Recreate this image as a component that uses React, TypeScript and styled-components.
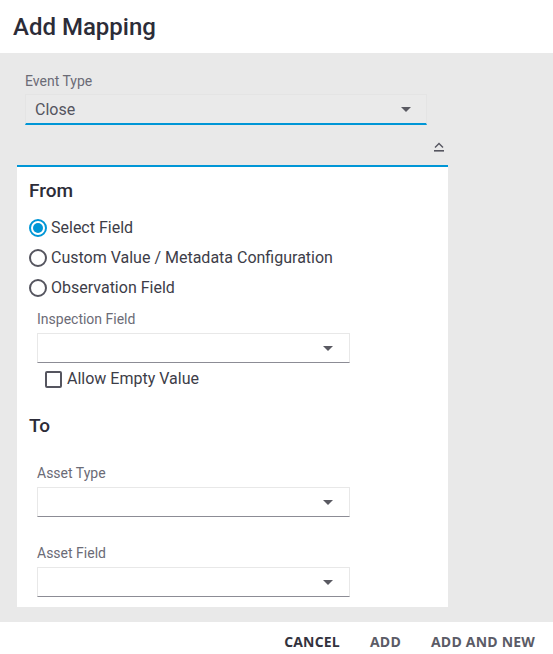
import React, { useState } from 'react';
import styled, { createGlobalStyle } from 'styled-components';

const GlobalStyle = createGlobalStyle`
  html, body {
    margin: 0;
    padding: 0;
    background: #ffffff;
    font-family: Roboto, 'Noto Sans', sans-serif;
  }
`;

const Dialog = styled.div`
  width: 553px;
  min-height: 654px;
  display: flex;
  flex-direction: column;
  background: #ffffff;
`;

const Title = styled.h2`
  margin: 0;
  height: 53px;
  padding: 0 13px;
  display: flex;
  align-items: center;
  font-size: 24px;
  font-weight: 500;
  color: #2c2c38;
`;

const Body = styled.div`
  background: #e9e9e9;
  padding: 19px 105px 15px 17px;
`;

const Top = styled.div`
  padding: 0 21px 0 8px;
`;

const Label = styled.div<{ $gap?: number }>`
  font-size: 14px;
  color: #6b6b76;
  line-height: 18px;
  margin-bottom: ${p => p.$gap ?? 5}px;
`;

const SelectBox = styled.div<{ $variant: 'filled' | 'outlined' }>`
  position: relative;
  display: flex;
  align-items: center;
  box-sizing: border-box;
  height: ${p => (p.$variant === 'filled' ? '31px' : '30px')};
  padding: 0 9px;
  font-size: 16px;
  color: #55555f;
  background: ${p => (p.$variant === 'filled' ? '#eaeaea' : '#ffffff')};
  border: 1px solid ${p => (p.$variant === 'filled' ? '#e4e4e4' : '#e8e8e8')};
  border-bottom: ${p => (p.$variant === 'filled' ? '2px solid #0096d6' : '1px solid #8c8c95')};
  width: ${p => (p.$variant === 'filled' ? '402px' : '313px')};
`;

const Arrow = styled.span<{ $right: number }>`
  position: absolute;
  right: ${p => p.$right}px;
  top: 50%;
  margin-top: -2px;
  width: 0;
  height: 0;
  border-left: 5px solid transparent;
  border-right: 5px solid transparent;
  border-top: 5px solid #5a5a62;
`;

const CollapseRow = styled.div`
  height: 42px;
  display: flex;
  align-items: center;
  justify-content: flex-end;
  padding: 4px 3px 0 0;
  box-sizing: border-box;
  border-bottom: 2px solid #0096d6;
`;

const Card = styled.div`
  background: #ffffff;
  padding: 12px 12px 10px 12px;
`;

const SectionTitle = styled.h3<{ $top?: number }>`
  margin: ${p => p.$top ?? 0}px 0 0 0;
  font-size: 19px;
  font-weight: 500;
  color: #2c2c38;
  line-height: 24px;
`;

const RadioGroup = styled.div`
  margin-top: 14px;
  display: flex;
  flex-direction: column;
  gap: 8px;
`;

const RadioRow = styled.label`
  display: flex;
  align-items: center;
  gap: 4px;
  font-size: 16px;
  color: #3d3d48;
  line-height: 22px;
  cursor: pointer;
`;

const RadioCircle = styled.span<{ $checked: boolean }>`
  width: 14px;
  height: 14px;
  border-radius: 50%;
  border: 2px solid ${p => (p.$checked ? '#0096d6' : '#55555f')};
  display: flex;
  align-items: center;
  justify-content: center;
  &::after {
    content: '';
    width: 10px;
    height: 10px;
    border-radius: 50%;
    background: ${p => (p.$checked ? '#0096d6' : 'transparent')};
  }
`;

const FieldBlock = styled.div<{ $top: number }>`
  margin: ${p => p.$top}px 0 0 8px;
`;

const CheckRow = styled.label`
  display: flex;
  align-items: center;
  gap: 5px;
  margin: 7px 0 0 16px;
  font-size: 16px;
  color: #3d3d48;
  line-height: 18px;
`;

const CheckBox = styled.span`
  width: 13px;
  height: 13px;
  border: 2px solid #55555f;
  border-radius: 2px;
`;

const Footer = styled.div`
  height: 32px;
  display: flex;
  align-items: center;
  justify-content: flex-end;
  padding: 3px 3px 0 0;
`;

const FooterButton = styled.button<{ $dim?: boolean }>`
  background: none;
  border: none;
  padding: 0 15px;
  font-family: 'Open Sans', sans-serif;
  font-size: 14px;
  font-weight: 700;
  letter-spacing: 0.2px;
  color: ${p => (p.$dim ? '#5b5b66' : '#33333e')};
  cursor: pointer;
`;

const options = ['Select Field', 'Custom Value / Metadata Configuration', 'Observation Field'];

function CollapseIcon(): JSX.Element {
  return (
    <svg width="12" height="12" viewBox="0 0 12 12">
      <path d="M2 6.5 L6 2.5 L10 6.5" fill="none" stroke="#55555f" strokeWidth="1.4" />
      <rect x="1" y="9" width="10" height="1.6" fill="#55555f" />
    </svg>
  );
}

export default function App(): JSX.Element {
  const [source, setSource] = useState(0);

  return (
    <Dialog>
      <GlobalStyle />
      <Title>Add Mapping</Title>
      <Body>
        <Top>
          <Label $gap={4}>Event Type</Label>
          <SelectBox $variant="filled">
            Close
            <Arrow $right={15} />
          </SelectBox>
        </Top>
        <CollapseRow>
          <CollapseIcon />
        </CollapseRow>
        <Card>
          <SectionTitle>From</SectionTitle>
          <RadioGroup>
            {options.map((o, i) => (
              <RadioRow key={o} onClick={() => setSource(i)}>
                <RadioCircle $checked={source === i} />
                {o}
              </RadioRow>
            ))}
          </RadioGroup>
          <FieldBlock $top={11}>
            <Label>Inspection Field</Label>
            <SelectBox $variant="outlined">
              <Arrow $right={16} />
            </SelectBox>
          </FieldBlock>
          <CheckRow>
            <CheckBox />
            Allow Empty Value
          </CheckRow>
          <SectionTitle $top={26}>To</SectionTitle>
          <FieldBlock $top={26}>
            <Label>Asset Type</Label>
            <SelectBox $variant="outlined">
              <Arrow $right={16} />
            </SelectBox>
          </FieldBlock>
          <FieldBlock $top={27}>
            <Label>Asset Field</Label>
            <SelectBox $variant="outlined">
              <Arrow $right={16} />
            </SelectBox>
          </FieldBlock>
        </Card>
      </Body>
      <Footer>
        <FooterButton>CANCEL</FooterButton>
        <FooterButton $dim>ADD</FooterButton>
        <FooterButton $dim>ADD AND NEW</FooterButton>
      </Footer>
    </Dialog>
  );
}
